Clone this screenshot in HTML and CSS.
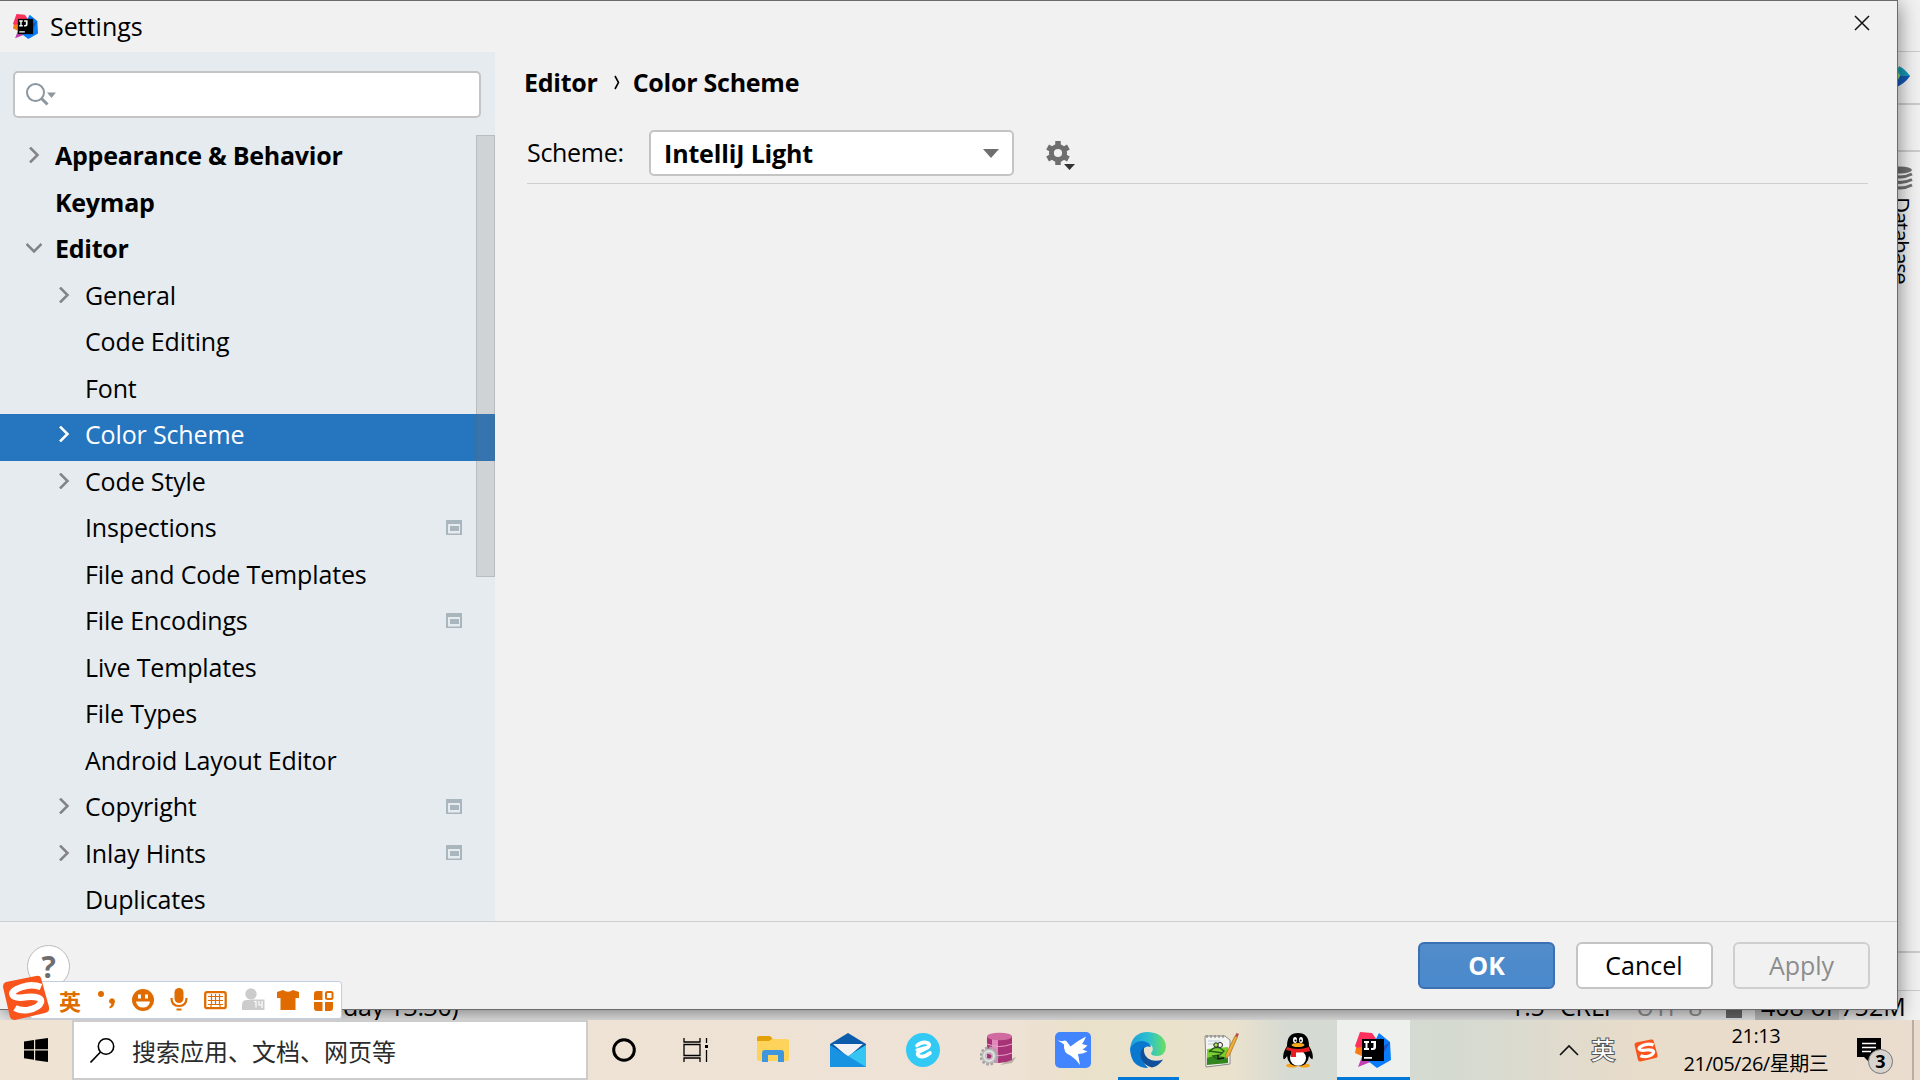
FILE: index.html
```html
<!DOCTYPE html>
<html lang="zh-CN">

<head>
    <meta charset="UTF-8">
    <title>Settings</title>
    <link rel="stylesheet" href="styles.css">
</head>

<body>
    <!-- shared icons -->
    <svg class="defs" width="0" height="0">
        <symbol id="right" viewBox="0 0 16 16">
            <path d="M4 0.500 L11.500 8 L4 15.500" fill="none" stroke="currentColor" stroke-width="2.500" />
        </symbol>
        <symbol id="down" viewBox="0 0 16 16">
            <path d="M0.500 4 L8 11.500 L15.500 4" fill="none" stroke="currentColor" stroke-width="2.500" />
        </symbol>
        <symbol id="project" viewBox="0 0 16 15">
            <path fill="#a9b6be" fill-rule="evenodd" d="M0 0h16v15H0z M2 4v9.500h12V4z M4 6h9v5H4z" />
        </symbol>
        <symbol id="idea" viewBox="0 0 36 36">
            <path d="M5 0 L17 1 L22 8 L12 16 L8 24 L0 14z" fill="#fe315d" />
            <path d="M1 16 L10 14 L9 25 L0 21z" fill="#f97a12" />
            <path d="M8 22 L18 29 L3 35z" fill="#c13fb0" />
            <path d="M24 1 L35 10 L36 28 L22 36 L13 29 L20 9z" fill="#087cfa" />
            <path d="M28 15 L35 10 L29 20z" fill="#2350b8" />
            <path d="M7 7h22v22H7z" fill="#000" />
            <path d="M9 9h5v2h-1.500v5H14v2H9v-2h1.500v-5H9zM16 9h5v6q0 3-3 3h-2v-2h1.500q1 0 1-1.500V11H16zM9 25h8v1.800H9z" fill="#fff" />
        </symbol>
        <symbol id="sogou" viewBox="0 0 48 46">
            <path d="M4 7 Q1 8 1 12 L8 42 Q9 45 13 45 L43 38 Q48 37 47 32 L39 3 Q38 0 34 1z" fill="#f9541c" />
            <path d="M39 12 Q30 8.500 20 12 Q8 16 11 20.500 Q13 24 25 22 Q40 21 39 27 Q37 33 26 35 Q18 36 13 33" fill="none" stroke="#fff" stroke-width="6.500" />
        </symbol>
    </svg>

    <main class="desktop">
        <!-- IDE window behind the dialog -->
        <div class="ide">
            <div class="ide-row ide-menu"></div>
            <div class="ide-row ide-toolbar">
                <svg width="30" height="28" viewBox="0 0 30 28">
                    <path d="M0 2 Q18 1 29 14 Q18 27 0 26z" fill="#1eaaa0" />
                    <path d="M12 5 L20 14 L12 23z" fill="#9fd47f" />
                    <path d="M19 14 H29 Q24 22 13 26z" fill="#1558b4" />
                    <path d="M19 14 H29 Q24 7 18 4z" fill="#1797b6" />
                </svg>
            </div>
            <div class="ide-row ide-tabs"></div>
            <div class="ide-row ide-body">
                <svg width="26" height="25" viewBox="0 0 26 25">
                    <ellipse cx="13" cy="4" rx="12" ry="3.500" fill="#6e6e6e" />
                    <path d="M1 8 Q13 14 25 8 M1 13.500 Q13 19.500 25 13.500 M1 19 Q13 25 25 19" fill="none" stroke="#6e6e6e" stroke-width="3" />
                </svg>
                <span class="vertical">Database</span>
            </div>
            <div class="ide-row ide-tools"></div>
            <div class="ide-row ide-status">
                <span class="st-msg">day 13:30)</span>
                <span class="st-pos">1:5</span>
                <span class="st-crlf">CRLF</span>
                <span class="st-utf">UTF-8</span>
                <span class="st-lock"></span>
                <span class="st-mem">408 of 752M</span>
            </div>
        </div>

        <section class="dialog">
            <header class="titlebar">
                <svg class="logo" width="25" height="25"><use href="#idea" /></svg>
                <h1>Settings</h1>
                <svg class="close" width="16" height="16" viewBox="0 0 16 16">
                    <path d="M1 1 L15 15 M15 1 L1 15" stroke="#111" stroke-width="1.500" />
                </svg>
            </header>

            <div class="content">
                <aside class="sidebar">
                    <div class="search">
                        <svg width="30" height="23" viewBox="0 0 30 23">
                            <circle cx="9.500" cy="9.500" r="8.500" fill="none" stroke="#8b979f" stroke-width="2" />
                            <path d="M15.500 15.500 L21.500 21.500" stroke="#8b979f" stroke-width="3" />
                            <path d="M21 9.500h9l-4.500 5.500z" fill="#8b979f" />
                        </svg>
                    </div>
                    <ul class="tree">
                        <li class="top"><svg class="arrow"><use href="#right" /></svg><span>Appearance &amp; Behavior</span></li>
                        <li class="top"><i class="arrow"></i><span>Keymap</span></li>
                        <li class="top"><svg class="arrow"><use href="#down" /></svg><span>Editor</span></li>
                        <li><svg class="arrow"><use href="#right" /></svg><span>General</span></li>
                        <li><i class="arrow"></i><span>Code Editing</span></li>
                        <li><i class="arrow"></i><span>Font</span></li>
                        <li class="selected"><svg class="arrow"><use href="#right" /></svg><span>Color Scheme</span></li>
                        <li><svg class="arrow"><use href="#right" /></svg><span>Code Style</span></li>
                        <li><i class="arrow"></i><span>Inspections</span><svg class="mark"><use href="#project" /></svg></li>
                        <li><i class="arrow"></i><span>File and Code Templates</span></li>
                        <li><i class="arrow"></i><span>File Encodings</span><svg class="mark"><use href="#project" /></svg></li>
                        <li><i class="arrow"></i><span>Live Templates</span></li>
                        <li><i class="arrow"></i><span>File Types</span></li>
                        <li><i class="arrow"></i><span>Android Layout Editor</span></li>
                        <li><svg class="arrow"><use href="#right" /></svg><span>Copyright</span><svg class="mark"><use href="#project" /></svg></li>
                        <li><svg class="arrow"><use href="#right" /></svg><span>Inlay Hints</span><svg class="mark"><use href="#project" /></svg></li>
                        <li><i class="arrow"></i><span>Duplicates</span></li>
                    </ul>
                    <div class="scrollbar"></div>
                </aside>

                <div class="panel">
                    <div class="breadcrumb">
                        <span>Editor</span>
                        <svg width="6" height="15" viewBox="0 0 6 15"><path d="M1 1 L4.500 7.500 L1 14" fill="none" stroke="#000" stroke-width="1.600" /></svg>
                        <span>Color Scheme</span>
                    </div>
                    <div class="scheme">
                        <label>Scheme:</label>
                        <div class="combo">
                            <span>IntelliJ Light</span>
                            <svg width="16" height="9" viewBox="0 0 16 9"><path d="M0 0h16l-8 9z" fill="#6e6e6e" /></svg>
                        </div>
                        <svg class="gear" width="30" height="30" viewBox="0 0 30 30">
                            <circle cx="12" cy="12" r="6.600" fill="none" stroke="#6e6e6e" stroke-width="5" />
                            <g stroke="#6e6e6e" stroke-width="5.500">
                                <path d="M12 0v5M12 19v5M1.600 6l4.300 2.500M18 15.500l4.400 2.500M1.600 18l4.300-2.500M18 8.500L22.400 6" />
                            </g>
                            <path d="M18 23h11l-5.500 6z" fill="#333" />
                        </svg>
                    </div>
                </div>
            </div>

            <footer class="buttons">
                <div class="help">?</div>
                <button class="btn ok">OK</button>
                <button class="btn">Cancel</button>
                <button class="btn disabled">Apply</button>
            </footer>
        </section>

        <!-- input method toolbar -->
        <div class="ime">
            <svg class="ime-logo" width="48" height="46"><use href="#sogou" /></svg>
            <span class="ime-lang">英</span>
            <svg width="36" height="24" viewBox="0 0 36 24">
                <circle cx="12" cy="6" r="3" fill="#e06c00" />
                <path d="M20 13a3 3 0 1 1 5.500 2q-.5 4-4.500 5.500l-.8-1.500q2.200-1.200 2.200-3.200q-2.400-.3-2.400-2.800z" fill="#e06c00" />
            </svg>
            <svg width="36" height="24" viewBox="0 0 36 24">
                <circle cx="18" cy="12" r="11" fill="#e06c00" />
                <path d="M13 6.500h3v4h-3zM20 6.500h3v4h-3zM11 13.500h14q-1 6-7 6t-7-6z" fill="#fff" />
            </svg>
            <svg width="36" height="24" viewBox="0 0 36 24">
                <rect x="13.500" y="0" width="9" height="15" rx="4.500" fill="#e06c00" />
                <path d="M10.500 10q0 8 7.500 8t7.500-8" fill="none" stroke="#e06c00" stroke-width="2.200" />
                <path d="M15.500 21.500h5" stroke="#e06c00" stroke-width="2" />
            </svg>
            <svg width="37" height="24" viewBox="0 0 37 24">
                <rect x="8.200" y="4.200" width="20.500" height="16" rx="2" fill="none" stroke="#e06c00" stroke-width="2.300" />
                <path d="M11 8.500h15M11 12.500h15M11 16.500h15M14.500 6v10.500M18.500 6v10.500M22.500 6v10.500M14 17v2M23 17v2" stroke="#e06c00" stroke-width="1.200" />
            </svg>
            <svg width="37" height="24" viewBox="0 0 37 24">
                <circle cx="17" cy="6" r="5.700" fill="#ccc" />
                <path d="M8 22v-5q0-5 5-5h8v10z" fill="#ccc" />
                <path d="M18.500 11.500h12v10.500h-12z" fill="#ccc" />
                <path d="M20 13.500h2v6M25 13v4h3M28 13v7" fill="none" stroke="#fff" stroke-width="1.200" />
            </svg>
            <svg width="34" height="24" viewBox="0 0 34 24">
                <path d="M12 2q5 3.500 10 0l6 2v6h-3.500v12h-15V10H6V4z" fill="#e06c00" />
            </svg>
            <svg width="38" height="24" viewBox="0 0 38 24">
                <path d="M12 3h5.500v9H9V6q0-3 3-3zM9 14h8.500v9H12q-3 0-3-3zM20 14h8v6q0 3-3 3h-5z" fill="#e06c00" />
                <rect x="21" y="4" width="6.500" height="7" rx="1.500" fill="none" stroke="#e06c00" stroke-width="2" />
            </svg>
        </div>
    </main>

    <nav class="taskbar">
        <div class="start">
            <svg width="24" height="24" viewBox="0 0 24 24">
                <path d="M0 3.500L10 2v9.300H0zM11.200 1.800L24 0v11.300H11.200zM0 12.500h10v9.300L0 20.300zM11.200 12.500H24V24l-12.800-1.800z" />
            </svg>
        </div>
        <div class="find">
            <svg width="25" height="25" viewBox="0 0 25 25">
                <circle cx="16" cy="8.500" r="7.700" fill="none" stroke="#000" stroke-width="1.600" />
                <path d="M10.500 14L.5 24.500" stroke="#000" stroke-width="1.600" />
            </svg>
            <span>搜索应用、文档、网页等</span>
        </div>
        <ul class="apps">
            <li><svg width="24" height="24" viewBox="0 0 24 24"><circle cx="12" cy="12" r="10.300" fill="none" stroke="#000" stroke-width="3" /></svg></li>
            <li class="taskview"><svg width="26" height="24" viewBox="0 0 26 24"><path d="M1 0v4h16V0M1 24v-4h16v4M1 6.500h16v11H1zM23.500 0v5M23.500 12v12" fill="none" stroke="#000" stroke-width="1.300" /><path d="M22 7h3v3h-3z" /></svg></li>
            <li>
                <svg width="32" height="28" viewBox="0 0 32 28">
                    <path d="M0 2q0-2 2-2h11l3 3v6H0z" fill="#e3a00b" />
                    <path d="M0 5h12l3-2h15q2 0 2 2v18q0 2-2 2H2q-2 0-2-2z" fill="#fed35b" />
                    <path d="M5 17q0-3 3-3h16q3 0 3 3v9h-6v-7h-10v7H5z" fill="#3d96de" />
                </svg>
            </li>
            <li>
                <svg width="36" height="34" viewBox="0 0 36 34">
                    <path d="M0 11L18 0l18 11v12H0z" fill="#0b5cab" />
                    <path d="M3 11h30L18 24z" fill="#f2f2f5" />
                    <path d="M36 12v22H0z" fill="#35c5f3" />
                    <path d="M0 12l36 22H0z" fill="#1893e2" />
                </svg>
            </li>
            <li>
                <svg width="34" height="34" viewBox="0 0 34 34">
                    <circle cx="17" cy="17" r="17" fill="#33c9f5" />
                    <path d="M11 12.500q5-4.500 11-2.500 3 2.500-1 5l-8 4q-3 2 0 4 5 2 11-3" fill="none" stroke="#fff" stroke-width="3.600" stroke-linecap="round" />
                    <path d="M11 17l11-3" stroke="#fff" stroke-width="3" stroke-linecap="round" />
                </svg>
            </li>
            <li>
                <svg width="36" height="36" viewBox="0 0 36 36">
                    <path d="M29 28l7-3-4 6-12 2z" fill="#b9afa5" />
                    <path d="M7 4v24q12 6 25 0V4z" fill="#a83277" />
                    <path d="M12 6v24l6 1V7z" fill="#e08abb" />
                    <ellipse cx="19.500" cy="4.500" rx="12.500" ry="3.800" fill="#cf6ba0" />
                    <path d="M7 12q12 5 25 0M7 21q12 5 25 0" fill="none" stroke="#e9a3c8" />
                    <circle cx="9" cy="24" r="5" fill="none" stroke="#bdbdbd" stroke-width="5" />
                    <circle cx="9" cy="24" r="8.300" fill="none" stroke="#a5a5a5" stroke-width="2.500" stroke-dasharray="2.700 1.650" />
                    <circle cx="9" cy="24" r="5" fill="none" stroke="#e2e2e2" stroke-width="1.800" />
                </svg>
            </li>
            <li>
                <svg width="36" height="36" viewBox="0 0 36 36">
                    <rect width="36" height="36" rx="5" fill="#4285ff" />
                    <path d="M2.500 8.500l5 .8q3-2 5 1.200l3 4Q22 9 31 4.500q-2 5-4 7.500l5.500 1.500q-3 3-5 4l5 2q-5 2.500-9.500 2.500l2 11q-4-6-9.500-9.500Q8 21 9 12.500q-3-2.500-6.500-4z" fill="#fff" />
                </svg>
            </li>
            <li class="open">
                <svg width="36" height="36" viewBox="0 0 36 36">
                    <defs>
                        <linearGradient id="wave"><stop offset="0" stop-color="#1b9de0" /><stop offset=".55" stop-color="#2fc3c9" /><stop offset="1" stop-color="#6be05e" /></linearGradient>
                    </defs>
                    <path d="M0 17Q2 0 18 0q17 1 18 15q-1 9-9 9-6 0-6-3 3-3 1-7Q14 7 0 17z" fill="url(#wave)" />
                    <path d="M0 17q4-8 12-8 8 1 9 6-6-2-9 4-2 9 6 17Q1 36 0 17z" fill="#0b78d0" />
                    <path d="M14 15q-5 4-3 11 3 8 11 9.500 7-1.500 11-8-9 3-15-1-5-4-4-11.500z" fill="#10509b" />
                </svg>
            </li>
            <li>
                <svg class="npp" width="36" height="36" viewBox="0 0 36 36">
                    <path d="M2 4h20l5 4v24L3 35z" fill="#f4f4f1" stroke="#888" />
                    <path d="M4 17l21-2v16L4 32z" fill="#7bcf31" />
                    <path d="M4 26q9-4 21 0v5L4 33z" fill="#33851f" />
                    <path d="M4 3v3M8 3v3M12 3v3M16 3v3M20 3v3" stroke="#777" />
                    <path d="M5 9h12M5 12h6" stroke="#b8cbd8" />
                    <path d="M6 20q5-6 11-4l4 3-4 4-7 1 4 3M6 19l14 2" fill="none" stroke="#285d18" stroke-width="1.300" />
                    <circle cx="17" cy="13" r="2.500" fill="#fff" stroke="#222" /><circle cx="13" cy="13" r="2.200" fill="#a9e84f" stroke="#222" />
                    <path d="M15 23v4l6-1" fill="none" stroke="#111" stroke-width="1.300" />
                    <path d="M32 4l2.500 1-8 18-4 4 .5-5z" fill="#f2ad32" stroke="#9c6b25" stroke-width=".7" /><path d="M32 4l1.500-3 2.500 1-1.500 3z" fill="#b84d50" />
                </svg>
            </li>
            <li>
                <svg width="30" height="36" viewBox="0 0 30 36">
                    <ellipse cx="9" cy="33.500" rx="6" ry="2" fill="#f6a21a" /><ellipse cx="21" cy="33.500" rx="6" ry="2" fill="#f6a21a" />
                    <path d="M4 14Q4 1 15 1t11 13q5 8 3.500 13-1 1-3.500-3-1 10-11 10T4 24q-2 4-3.500 3Q-1 22 4 14z" fill="#000" />
                    <ellipse cx="15" cy="26" rx="8" ry="7.800" fill="#fff" />
                    <ellipse cx="12" cy="8" rx="2" ry="3" fill="#fff" /><ellipse cx="18" cy="8" rx="2" ry="3" fill="#fff" />
                    <circle cx="12.500" cy="8.500" r="1" /><circle cx="17.700" cy="8.500" r="1" />
                    <ellipse cx="15" cy="13" rx="6.500" ry="2" fill="#f9aa1b" />
                    <path d="M4 15q11 4 22 0l1 4q-6 2-14 1.500V25H8v-6l-5-1z" fill="#e81e1e" />
                </svg>
            </li>
            <li class="open active"><svg width="36" height="36"><use href="#idea" /></svg></li>
        </ul>
        <div class="tray">
            <svg class="up" width="20" height="12" viewBox="0 0 20 12"><path d="M1 11l9-9 9 9" fill="none" stroke="#111" stroke-width="1.600" /></svg>
            <span class="lang">英</span>
            <svg class="tray-sogou" width="24" height="23"><use href="#sogou" /></svg>
            <div class="clock">
                <span>21:13</span>
                <span>21/05/26/星期三</span>
            </div>
            <div class="notice">
                <svg width="24" height="26" viewBox="0 0 24 26">
                    <path d="M0 0h24v19H13v6l-6-6H0z" />
                    <path d="M5 5.500h14M5 9.500h14M5 13.500h9" stroke="#fff" stroke-width="1.300" />
                </svg>
                <span class="badge">3</span>
            </div>
        </div>
    </nav>
</body>

</html>
```

FILE: styles.css
```css
* {
    margin: 0;
    padding: 0;
    box-sizing: border-box;
}

body {
    width: 1920px;
    height: 1080px;
    overflow: hidden;
    display: flex;
    flex-direction: column;
    font-family: "Open Sans", "Noto Sans", "Noto Sans CJK SC", sans-serif;
    font-size: 25px;
    letter-spacing: -0.15px;
    color: #000;
}

ul {
    list-style: none;
}

svg {
    flex-shrink: 0;
}

.defs {
    position: absolute;
}

.desktop {
    position: relative;
    height: 1020px;
    overflow: hidden;
}

/* IDE window */
.ide {
    height: 1020px;
    display: flex;
    flex-direction: column;
    background-color: #f2f2f2;
}

.ide-row {
    display: flex;
    border-bottom: 1px solid #cdcdcd;
}

.ide-menu {
    height: 52px;
}

.ide-toolbar {
    height: 53px;
    justify-content: flex-end;
    align-items: center;
    padding: 0 9px 3px 0;
    border-bottom-width: 2px;
}

.ide-tabs {
    height: 47px;
    border-bottom-width: 2px;
}

.ide-body {
    height: 801px;
    flex-direction: column;
    align-items: flex-end;
    padding: 14px 7px 0 0;
    border-bottom-width: 2px;
}

.vertical {
    writing-mode: vertical-rl;
    margin-top: 6px;
    font-size: 22px;
    line-height: 22px;
    letter-spacing: -1.3px;
}

.ide-tools {
    height: 38px;
}

.ide-status {
    height: 29px;
    padding-left: 343px;
    border: 0;
    line-height: 30px;
    white-space: nowrap;
}

.st-msg {
    width: 1167px;
    letter-spacing: -0.4px;
}

.st-pos {
    width: 50px;
}

.st-crlf {
    width: 76px;
}

.st-utf {
    width: 90px;
    color: #999;
}

.st-lock {
    width: 16px;
    height: 27px;
    margin-right: 13px;
    background-color: #6e6e6e;
}

.st-mem {
    width: 90px;
    padding-left: 6px;
    letter-spacing: 0;
    background: linear-gradient(to right, #c4c4c4 84px, #dedede 84px);
}

/* dialog */
.dialog {
    position: absolute;
    left: 0;
    top: 0;
    width: 1898px;
    height: 1010px;
    display: flex;
    flex-direction: column;
    background-color: #f1f1f1;
    border: 1px solid #6c6a6c;
    border-left: 0;
    box-shadow: 0 4px 20px rgba(0, 0, 0, 0.5);
}

.titlebar {
    height: 51px;
    display: flex;
    align-items: center;
    padding: 0 27px 0 13px;
}

.titlebar h1 {
    flex: 1;
    margin-left: 12px;
    padding-bottom: 2px;
    font-size: 25px;
    font-weight: normal;
    letter-spacing: 0;
}

.close {
    margin-bottom: 7px;
}

.content {
    height: 869px;
    display: flex;
}

.sidebar {
    position: relative;
    width: 495px;
    overflow: hidden;
    background-color: #e6ebef;
}

.search {
    width: 468px;
    height: 47px;
    margin: 19px 0 17px 13px;
    padding: 0 11px;
    display: flex;
    align-items: center;
    background-color: #fff;
    border: 2px solid #c4c4c4;
    border-radius: 5px;
}

.tree li {
    height: 46.5px;
    display: flex;
    align-items: center;
    padding: 0 33px 6px 56px;
}

.tree li.top {
    padding-left: 26px;
    font-weight: bold;
    letter-spacing: -0.25px;
}

.tree span {
    flex: 1;
    white-space: nowrap;
}

.arrow {
    width: 16px;
    height: 16px;
    margin-right: 13px;
    color: #828487;
}

.mark {
    width: 16px;
    height: 15px;
}

.tree .selected {
    background-color: #2675bf;
    color: #fff;
}

.selected .arrow {
    color: #fff;
}

.scrollbar {
    position: absolute;
    right: 0;
    top: 83px;
    width: 19px;
    height: 442px;
    background-color: rgba(115, 115, 115, 0.2);
    border: 1px solid rgba(90, 90, 90, 0.18);
}

.panel {
    flex: 1;
    padding: 10px 29px 0 32px;
}

.breadcrumb {
    height: 40px;
    display: flex;
    align-items: center;
    margin-left: -3px;
    font-weight: bold;
    letter-spacing: -0.25px;
}

.breadcrumb svg {
    margin: 0 13px 0 16px;
}

.scheme {
    height: 82px;
    display: flex;
    align-items: center;
    padding: 28px 0 7px;
    border-bottom: 1px solid #cfcfcf;
}

.scheme label {
    width: 122px;
    padding-bottom: 2px;
    letter-spacing: -0.3px;
}

.combo {
    width: 365px;
    height: 46px;
    display: flex;
    align-items: center;
    justify-content: space-between;
    padding: 0 13px;
    background-color: #fff;
    border: 2px solid #c4c4c4;
    border-radius: 5px;
    font-weight: bold;
}

.combo span {
    padding-bottom: 1px;
}

.gear {
    margin: 5px 0 0 32px;
}

.buttons {
    height: 88px;
    display: flex;
    align-items: center;
    padding: 0 27px;
    border-top: 1px solid #cfcfcf;
}

.help {
    width: 43px;
    height: 43px;
    margin: 2px auto 0 0;
    border: 1px solid #bcbcbc;
    border-radius: 50%;
    background-color: #fff;
    color: #6e6e6e;
    font-size: 30px;
    font-weight: bold;
    line-height: 41px;
    text-align: center;
}

.btn {
    width: 137px;
    height: 47px;
    margin-left: 20.5px;
    padding-bottom: 1px;
    background-color: #fff;
    border: 2px solid #c4c4c4;
    border-radius: 6px;
    font: inherit;
}

.btn.ok {
    background: linear-gradient(#528ccb, #4989cc);
    border-color: #3b70b2;
    color: #fff;
    font-weight: bold;
}

.btn.disabled {
    background-color: transparent;
    border-color: #cfcfcf;
    color: #8c8c8c;
}

/* input method */
.ime {
    position: absolute;
    left: 30px;
    top: 981px;
    width: 312px;
    height: 38px;
    display: flex;
    align-items: center;
    padding-left: 23px;
    background-color: #fff;
    border: 1px solid #c3cfe0;
    border-radius: 3px;
}

.ime-logo {
    position: absolute;
    left: -29px;
    top: -7px;
}

.ime-lang {
    flex: 0 0 35px;
    padding-left: 5px;
    color: #e06c00;
    font-family: "Noto Sans CJK SC", sans-serif;
    font-size: 22px;
    font-weight: bold;
    line-height: 30px;
}

/* taskbar */
.taskbar {
    height: 60px;
    display: flex;
    background: linear-gradient(to right, #efe3d3 0, #eee2d6 1000px, #eae1cb 1080px, #ebe2cd 1230px, #d5dad3 1290px, #d5dad1 1460px, #e8dcca 1640px, #eadcce 1920px);
    font-family: "Open Sans", "Noto Sans CJK SC", sans-serif;
}

.start {
    width: 72px;
    display: flex;
    align-items: center;
    justify-content: center;
}

.find {
    width: 516px;
    display: flex;
    align-items: center;
    gap: 17px;
    padding-left: 16px;
    background-color: #fff;
    border: 2px solid #ccc;
    color: #2b2b2b;
    font-size: 24px;
    letter-spacing: 0;
    white-space: nowrap;
}

.apps {
    display: flex;
    margin-left: -2px;
}

.apps li {
    width: 73px;
    margin: 0 1px;
    padding-right: 2px;
    display: flex;
    align-items: center;
    justify-content: center;
}

.apps li:first-child {
    padding-right: 0;
}

.apps .taskview {
    padding-right: 6px;
}

.npp {
    margin-right: 3px;
}

.open {
    background: linear-gradient(#0078d7, #0078d7) center bottom / 61px 3px no-repeat;
}

.open.active {
    background-color: #eef0ed;
    background-size: 73px 3px;
}

.tray {
    flex: 1;
    display: flex;
    align-items: center;
    margin-right: 6px;
    padding-left: 148px;
    border-right: 2px solid #b9afa5;
}

.lang {
    margin-left: 12px;
    color: #fff;
    font-size: 24px;
    line-height: 30px;
    -webkit-text-stroke: 2px #555;
    paint-order: stroke fill;
}

.tray-sogou {
    margin-left: 19px;
}

.clock {
    width: 150px;
    margin-left: 23px;
    display: flex;
    flex-direction: column;
    align-items: center;
    font-size: 20px;
    line-height: 28px;
    letter-spacing: -0.5px;
    white-space: nowrap;
}

.notice {
    position: relative;
    height: 26px;
    margin-left: 26px;
}

.badge {
    position: absolute;
    left: 11px;
    top: 12px;
    width: 25px;
    height: 25px;
    border: 1px solid #777;
    border-radius: 50%;
    background-color: #d8d3cd;
    font-size: 18px;
    font-weight: bold;
    line-height: 22px;
    text-align: center;
}
```
